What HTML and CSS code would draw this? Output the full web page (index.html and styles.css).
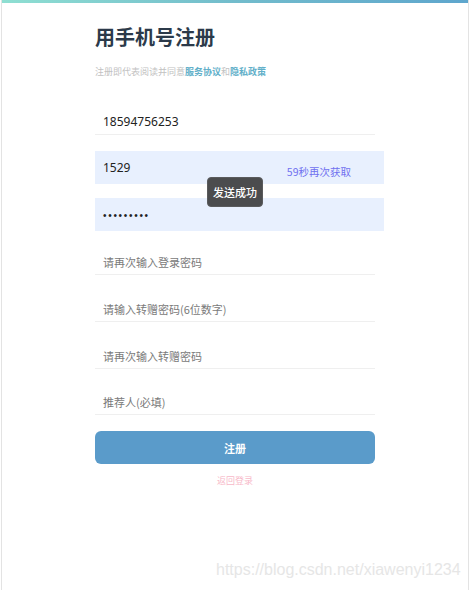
FILE: index.html
```html
<!DOCTYPE html>
<html lang="zh-CN">
<head>
<meta charset="utf-8">
<title>用手机号注册</title>
<link rel="stylesheet" href="styles.css">
</head>
<body>
<div class="frame">
  <div class="topbar"></div>
  <div class="form">
    <h1 class="title">用手机号注册</h1>
    <p class="agree">注册即代表阅读并同意<a class="link">服务协议</a>和<a class="link">隐私政策</a></p>

    <div class="field line f1"><span class="value">18594756253</span></div>
    <div class="field filled f2"><span class="value">1529</span><span class="countdown">59秒再次获取</span></div>
    <div class="field filled f3"><span class="dots">•••••••••</span></div>
    <div class="field line f4"><span class="ph">请再次输入登录密码</span></div>
    <div class="field line f5"><span class="ph">请输入转赠密码(6位数字)</span></div>
    <div class="field line f6"><span class="ph">请再次输入转赠密码</span></div>
    <div class="field line f7"><span class="ph">推荐人(必填)</span></div>

    <button class="submit">注册</button>
    <p class="back">返回登录</p>
  </div>
  <div class="toast">发送成功</div>
  <div class="watermark">https://blog.csdn.net/xiawenyi1234</div>
</div>
</body>
</html>
```

FILE: styles.css
```css
html, body {
  margin: 0;
  padding: 0;
  background: #ffffff;
}
body {
  font-family: "Noto Sans", "Noto Sans CJK SC", sans-serif;
}
.frame {
  position: relative;
  margin-left: 1px;
  width: 466px;
  height: 590px;
  border-left: 1px solid #e3e3e3;
  border-right: 1px solid #e3e3e3;
  box-sizing: content-box;
  overflow: hidden;
}
.topbar {
  height: 3px;
  background: linear-gradient(90deg, #8fdfd2 0%, #72bccc 50%, #5ea6cd 100%);
}
.form {
  padding-left: 93px;
  width: 289px;
}
.title {
  margin: 21px 0 0 0;
  font-family: "Noto Sans CJK SC", sans-serif;
  font-size: 20px;
  line-height: 26px;
  font-weight: 700;
  color: #2c3a4a;
}
.agree {
  margin: 16px 0 0 0;
  font-family: "Noto Sans CJK SC", sans-serif;
  font-size: 9px;
  line-height: 12px;
  color: #c2c2c2;
}
.link {
  color: #62afc9;
  font-weight: 700;
}
.field {
  display: flex;
  align-items: center;
  box-sizing: border-box;
  height: 33px;
  padding: 0 8px;
  font-size: 12px;
  font-family: "Noto Sans", "Noto Sans CJK SC", sans-serif;
}
.line {
  width: 280px;
  padding-top: 7px;
  border-bottom: 1px solid #efefef;
}
.filled {
  width: 289px;
  background: #e8f0fe;
}
.f1 { margin-top: 24px; }
.f2 { margin-top: 16px; }
.f3 { margin-top: 14px; }
.f4 { margin-top: 11px; }
.f5 { margin-top: 14px; }
.f6 { margin-top: 14px; }
.f7 { margin-top: 13px; }
.value {
  color: #222;
}
.ph {
  color: #7a7a7a;
  font-family: "Noto Sans CJK SC", sans-serif;
  font-size: 11px;
}
.dots {
  color: #222;
  font-family: "Liberation Sans", sans-serif;
  font-size: 10px;
  letter-spacing: 1.7px;
  padding-top: 2px;
}
.countdown {
  margin-left: auto;
  margin-right: 25px;
  padding-top: 8px;
  font-family: "Noto Sans CJK SC", sans-serif;
  font-size: 10.5px;
  color: #7070f0;
}
.submit {
  display: block;
  margin-top: 16px;
  width: 280px;
  height: 33px;
  border: none;
  border-radius: 6px;
  background: #5a9bca;
  color: #ffffff;
  font-family: "Noto Sans CJK SC", sans-serif;
  font-size: 11px;
  font-weight: 700;
}
.back {
  margin: 11px 0 0 0;
  width: 280px;
  text-align: center;
  font-family: "Noto Sans CJK SC", sans-serif;
  font-size: 9px;
  line-height: 12px;
  color: #f7b9c9;
}
.toast {
  position: absolute;
  left: 205px;
  top: 177px;
  width: 56px;
  height: 30px;
  box-sizing: border-box;
  border-radius: 4px;
  background: #4b4c4e;
  border: 1px solid #5a5b5d;
  color: #ffffff;
  font-family: "Noto Sans CJK SC", sans-serif;
  font-size: 11px;
  font-weight: 500;
  line-height: 28px;
  text-align: center;
}
.watermark {
  position: absolute;
  left: 214px;
  top: 560px;
  font-family: "Liberation Sans", sans-serif;
  font-size: 16px;
  line-height: 20px;
  color: #e6e6e6;
  white-space: nowrap;
}
```
